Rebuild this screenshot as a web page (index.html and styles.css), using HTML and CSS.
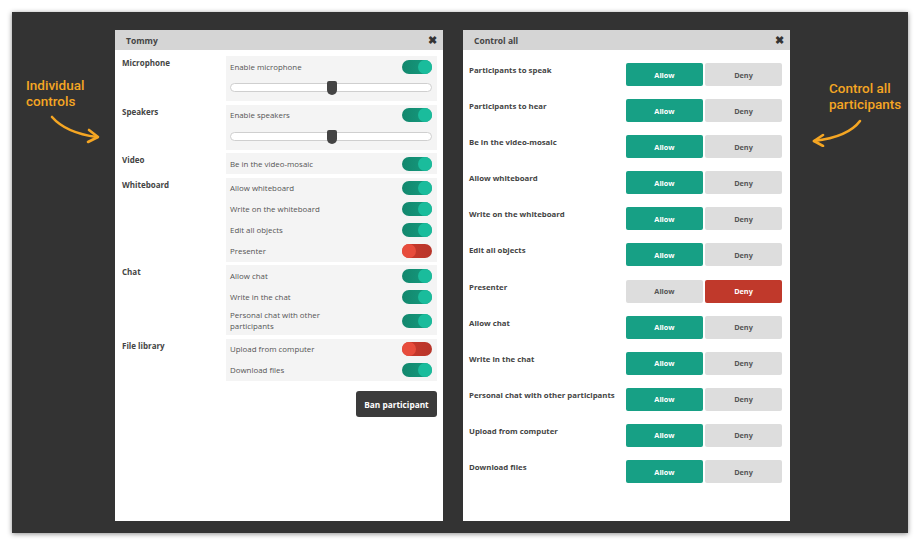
FILE: index.html
```html
<!DOCTYPE html>
<html lang="en">

<head>
    <meta charset="UTF-8">
    <meta name="viewport" content="width=device-width, initial-scale=1.0">
    <title>Participant controls</title>
    <link rel="stylesheet" href="styles.css">
</head>

<body>
    <div class="frame">
        <!-- Left annotation -->
        <div class="side side-left">
            <div class="note">Individual<br>controls</div>
            <svg class="arrow arrow-left" width="56" height="32" viewBox="0 0 56 32">
                <path d="M4 5 Q18 21 49 25" />
                <path d="M41 18 L50 25 L40 30" />
            </svg>
        </div>

        <!-- Single participant panel -->
        <div class="panel">
            <div class="panel-header">
                <span>Tommy</span>
                <span class="close">&#10006;</span>
            </div>
            <div class="controls">
                <div class="group-label">Microphone</div>
                <div class="card">
                    <div class="row">Enable microphone <span class="toggle on"></span></div>
                    <div class="slider-row">
                        <div class="track"><span class="thumb"></span></div>
                    </div>
                </div>

                <div class="group-label">Speakers</div>
                <div class="card">
                    <div class="row">Enable speakers <span class="toggle on"></span></div>
                    <div class="slider-row">
                        <div class="track"><span class="thumb"></span></div>
                    </div>
                </div>

                <div class="group-label">Video</div>
                <div class="card">
                    <div class="row">Be in the video-mosaic <span class="toggle on"></span></div>
                </div>

                <div class="group-label">Whiteboard</div>
                <div class="card">
                    <div class="row">Allow whiteboard <span class="toggle on"></span></div>
                    <div class="row">Write on the whiteboard <span class="toggle on"></span></div>
                    <div class="row">Edit all objects <span class="toggle on"></span></div>
                    <div class="row">Presenter <span class="toggle off"></span></div>
                </div>

                <div class="group-label">Chat</div>
                <div class="card">
                    <div class="row">Allow chat <span class="toggle on"></span></div>
                    <div class="row">Write in the chat <span class="toggle on"></span></div>
                    <div class="row tall"><span class="wrap">Personal chat with other participants</span> <span class="toggle on"></span></div>
                </div>

                <div class="group-label">File library</div>
                <div class="card">
                    <div class="row">Upload from computer <span class="toggle off"></span></div>
                    <div class="row">Download files <span class="toggle on"></span></div>
                </div>
            </div>
            <div class="actions">
                <button class="ban-button">Ban participant</button>
            </div>
        </div>

        <!-- Control all panel -->
        <div class="panel">
            <div class="panel-header">
                <span>Control all</span>
                <span class="close">&#10006;</span>
            </div>
            <div class="all-list">
                <div class="all-row"><span>Participants to speak</span><div class="switch"><button class="allow active">Allow</button><button class="deny">Deny</button></div></div>
                <div class="all-row"><span>Participants to hear</span><div class="switch"><button class="allow active">Allow</button><button class="deny">Deny</button></div></div>
                <div class="all-row"><span>Be in the video-mosaic</span><div class="switch"><button class="allow active">Allow</button><button class="deny">Deny</button></div></div>
                <div class="all-row"><span>Allow whiteboard</span><div class="switch"><button class="allow active">Allow</button><button class="deny">Deny</button></div></div>
                <div class="all-row"><span>Write on the whiteboard</span><div class="switch"><button class="allow active">Allow</button><button class="deny">Deny</button></div></div>
                <div class="all-row"><span>Edit all objects</span><div class="switch"><button class="allow active">Allow</button><button class="deny">Deny</button></div></div>
                <div class="all-row"><span>Presenter</span><div class="switch"><button class="allow">Allow</button><button class="deny active">Deny</button></div></div>
                <div class="all-row"><span>Allow chat</span><div class="switch"><button class="allow active">Allow</button><button class="deny">Deny</button></div></div>
                <div class="all-row"><span>Write in the chat</span><div class="switch"><button class="allow active">Allow</button><button class="deny">Deny</button></div></div>
                <div class="all-row"><span>Personal chat with other participants</span><div class="switch"><button class="allow active">Allow</button><button class="deny">Deny</button></div></div>
                <div class="all-row"><span>Upload from computer</span><div class="switch"><button class="allow active">Allow</button><button class="deny">Deny</button></div></div>
                <div class="all-row"><span>Download files</span><div class="switch"><button class="allow active">Allow</button><button class="deny">Deny</button></div></div>
            </div>
        </div>

        <!-- Right annotation -->
        <div class="side side-right">
            <div class="note">Control all<br>participants</div>
            <svg class="arrow arrow-right" width="58" height="32" viewBox="0 0 58 32">
                <path d="M52 6 Q40 22 6 26" />
                <path d="M15 20 L6 26 L15 31" />
            </svg>
        </div>
    </div>
</body>

</html>
```

FILE: styles.css
```css
body {
    font-family: "Open Sans", Arial, sans-serif;
    background-color: #fff;
    margin: 0;
    padding: 12px;
}

.frame {
    display: flex;
    gap: 20px;
    height: 521px;
    padding-top: 18px;
    box-sizing: border-box;
    background-color: #333;
    box-shadow: 0 1px 5px rgba(0, 0, 0, 0.45);
}

/* Annotations on the dark background */
.side {
    color: #f5a623;
}

.side-left {
    width: 103px;
    margin-right: -20px;
    padding: 47px 0 0 14px;
    box-sizing: border-box;
}

.side-right {
    flex: 1;
    margin-left: -20px;
    padding: 50px 0 0 39px;
}

.note {
    font-family: Roboto, Arial, sans-serif;
    font-weight: 500;
    font-size: 13.5px;
    line-height: 16px;
}

.arrow {
    display: block;
    margin-top: 3px;
}

.arrow path {
    fill: none;
    stroke: #f5a623;
    stroke-width: 2.6;
    stroke-linecap: round;
    stroke-linejoin: round;
}

.arrow-left {
    margin-left: 22px;
}

.arrow-right {
    margin-left: -21px;
}

/* Panels */
.panel {
    background-color: #fff;
    height: 491px;
}

.panel:nth-of-type(2) {
    width: 328px;
}

.panel:nth-of-type(3) {
    width: 327px;
}

.panel-header {
    display: flex;
    justify-content: space-between;
    align-items: center;
    height: 20px;
    padding: 0 6px 0 11px;
    background-color: #d5d5d5;
    color: #444;
    font-size: 8.5px;
    font-weight: 700;
}

.close {
    font-size: 10.5px;
    color: #333;
}

/* Individual controls */
.controls {
    display: grid;
    grid-template-columns: 104px 1fr;
    row-gap: 3.5px;
    padding: 6px 6px 0 7px;
}

.group-label {
    padding-top: 1px;
    font-size: 8px;
    font-weight: 700;
    color: #444;
}

.card {
    background-color: #f4f4f4;
}

.row {
    display: flex;
    justify-content: space-between;
    align-items: center;
    height: 21px;
    padding: 0 5px 0 4px;
    font-size: 7.9px;
    color: #555;
}

.row.tall {
    height: 28px;
}

.wrap {
    width: 100px;
    line-height: 11px;
}

.toggle {
    position: relative;
    width: 30px;
    height: 14px;
    border-radius: 7px;
    flex-shrink: 0;
}

.toggle::after {
    content: "";
    position: absolute;
    top: 0;
    width: 14px;
    height: 14px;
    border-radius: 50%;
}

.toggle.on {
    background: linear-gradient(to right, #12876d, #169c80);
}

.toggle.on::after {
    right: 0;
    background-color: #1abc9c;
}

.toggle.off {
    background: linear-gradient(to right, #c9392c, #b8352a);
}

.toggle.off::after {
    left: 0;
    background-color: #e74c3c;
}

.slider-row {
    height: 24px;
    padding: 6px 5px 0 4px;
    box-sizing: border-box;
}

.track {
    position: relative;
    height: 9px;
    background-color: #fff;
    border: 1px solid #cfcfcf;
    border-radius: 5px;
    box-sizing: border-box;
}

.thumb {
    position: absolute;
    left: 96px;
    top: -3px;
    width: 10px;
    height: 14px;
    background-color: #444;
    border-radius: 2px 2px 5px 5px;
}

.actions {
    text-align: right;
    padding: 10px 6px 0 0;
}

.ban-button {
    width: 81px;
    height: 26px;
    padding: 0;
    background-color: #3b3b3b;
    color: #fff;
    border: none;
    border-radius: 3px;
    font-family: "Open Sans", Arial, sans-serif;
    font-size: 8.3px;
    font-weight: 700;
}

/* Control all */
.all-list {
    display: flex;
    flex-direction: column;
    gap: 13.1px;
    padding: 13px 8px 0 6px;
}

.all-row {
    display: flex;
    justify-content: space-between;
    align-items: flex-start;
    height: 23px;
}

.all-row span {
    padding-top: 2px;
    font-size: 7.8px;
    font-weight: 700;
    color: #444;
}

.switch {
    display: flex;
    gap: 2px;
}

.switch button {
    width: 77px;
    height: 23px;
    padding: 0;
    border: none;
    border-radius: 2px;
    background-color: #ddd;
    color: #555;
    font-family: "Open Sans", Arial, sans-serif;
    font-size: 7.3px;
    font-weight: 700;
}

.switch .allow.active {
    background-color: #17a085;
    color: #fff;
}

.switch .deny.active {
    background-color: #c0392b;
    color: #fff;
}
```
